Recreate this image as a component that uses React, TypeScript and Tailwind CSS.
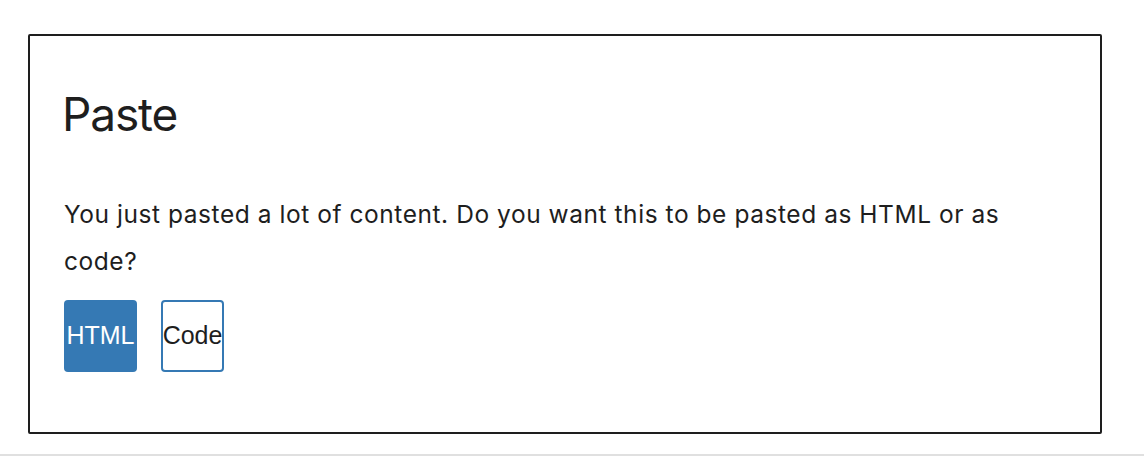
export default function App() {
  return (
    <div className="w-[1144px] h-[474px] bg-white overflow-hidden">
      <div className="ml-[28px] mt-[34px] w-[1074px] h-[400px] border-2 border-[#1e1e1e] rounded-[2px] px-[32px] pt-[50px] text-[#1e1e1e]">
        <h1 className="text-[46px] leading-[56px] tracking-[-0.025em] font-[Inter,sans-serif] font-normal">Paste</h1>
        <p className="mt-[49px] w-[980px] text-[24.5px] leading-[47px] tracking-[0.55px] font-[Inter,sans-serif] pl-[2px]">
          You just pasted a lot of content. Do you want this to be pasted as HTML or as code?
        </p>
        <div className="flex gap-[24px] mt-[15px] pl-[2px]">
          <button className="w-[73px] h-[72px] flex items-center justify-center bg-[#3579b4] text-white text-[25px] font-['Liberation_Sans',Arial,sans-serif] rounded-[4px]">
            HTML
          </button>
          <button className="w-[63px] h-[72px] flex items-center justify-center border-2 border-[#3579b4] bg-white text-[#1e1e1e] text-[25px] font-['Liberation_Sans',Arial,sans-serif] rounded-[4px] whitespace-nowrap">
            Code
          </button>
        </div>
      </div>
      <div className="mt-[20px] h-[2px] bg-[#e0e0e0]" />
    </div>
  )
}
